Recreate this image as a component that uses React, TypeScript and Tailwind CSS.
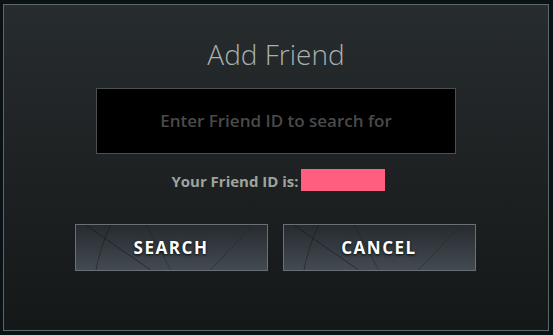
import React from "react";

function ButtonLines() {
  return (
    <svg
      className="absolute inset-0 h-full w-full pointer-events-none"
      viewBox="0 0 192 46"
      preserveAspectRatio="none"
    >
      <path d="M10 0 L75 46" stroke="#15191c" strokeWidth="1" fill="none" opacity="0.6" />
      <path d="M35 0 Q25 20 20 46" stroke="#15191c" strokeWidth="1" fill="none" opacity="0.5" />
      <path d="M70 0 Q85 25 95 46" stroke="#1a1e22" strokeWidth="1" fill="none" opacity="0.4" />
      <path d="M178 0 L135 46" stroke="#1a1e22" strokeWidth="1" fill="none" opacity="0.4" />
    </svg>
  );
}

function DialogButton({ label }: { label: string }) {
  return (
    <button className="relative flex h-[47px] w-[193px] items-center justify-center overflow-hidden border border-[#6b7072] bg-gradient-to-b from-[#262b2f] to-[#434b52]">
      <ButtonLines />
      <span className="relative text-[17px] font-bold tracking-[0.09em] text-white [text-shadow:0_1px_3px_rgba(0,0,0,0.9)]">
        {label}
      </span>
    </button>
  );
}

export default function App() {
  return (
    <div className="h-[335px] w-[553px] bg-[#0a1215] pl-[3px] pt-[4px] font-['Open_Sans',sans-serif]">
      <div className="flex h-[327px] w-[546px] flex-col items-center border border-[#5c6767] bg-gradient-to-b from-[#272c2e] to-[#151819]">
        <h1 className="mt-[30px] text-[28px] leading-[38px] font-light text-[#a9b0b0]">
          Add Friend
        </h1>
        <div className="mt-[15px] flex h-[66px] w-[360px] items-center justify-center border border-[#4b4f4f] bg-black">
          <span className="text-[17px] font-semibold text-[#4a4a4a]">
            Enter Friend ID to search for
          </span>
        </div>
        <div className="mt-[16px] flex h-[22px] items-center pl-[4px]">
          <span className="text-[15px] font-bold text-[#9ea49c]">
            Your Friend ID is:
          </span>
          <span className="ml-[2px] mb-[2px] h-[22px] w-[84px] bg-[#ff5e7e]" />
        </div>
        <div className="mt-[32px] flex gap-[15px] pr-[2px]">
          <DialogButton label="SEARCH" />
          <DialogButton label="CANCEL" />
        </div>
      </div>
    </div>
  );
}
